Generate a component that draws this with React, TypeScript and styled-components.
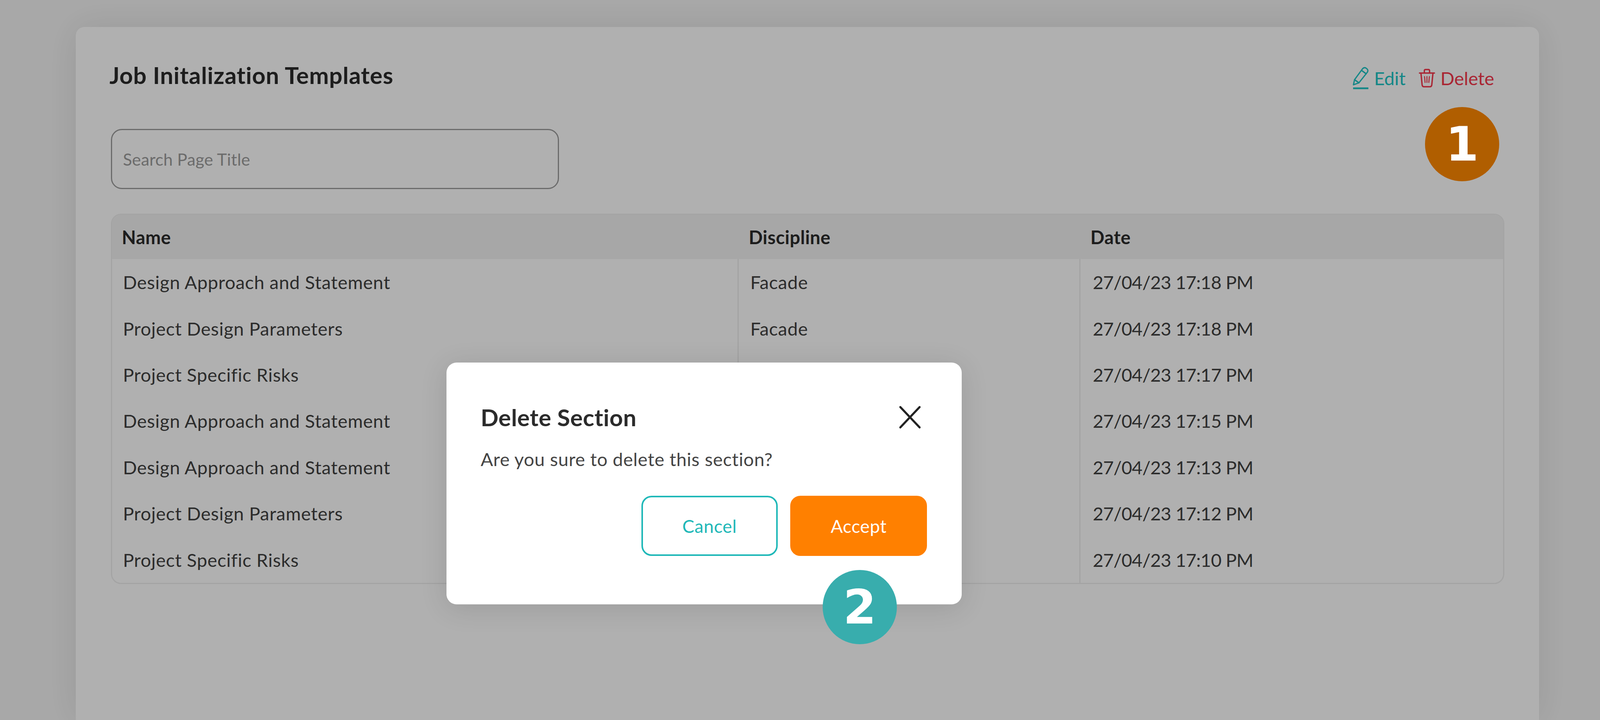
import React from "react";
import styled, { createGlobalStyle } from "styled-components";

/* Horizontal measures follow the frame width, so the layout fills whatever window it is opened in. */
const vx = (n: number) => `${(n / 43.24).toFixed(4)}vw`;

const Global = createGlobalStyle`
  html, body { margin: 0; padding: 0; height: 100%; overflow: hidden; background: #f4f4f4; }
  * { box-sizing: border-box; }
  #root { font-family: Lato, "Noto Sans", sans-serif; }
`;

const Page = styled.div`
  position: relative;
  width: 100vw;
  height: 100vh;
  padding: 69px ${vx(165)} 0 ${vx(205)};
  overflow: hidden;
`;

const Card = styled.main`
  height: 100%;
  background: #ffffff;
  border-radius: 22px 22px 0 0;
  box-shadow: 0 0 90px rgba(0, 0, 0, 0.09);
  padding: 84px ${vx(94)} 0 ${vx(95)};
`;

const TopBar = styled.header`
  display: flex;
  justify-content: space-between;
  align-items: flex-start;
  height: 177px;
`;

const Title = styled.h1`
  margin: 0 0 0 -4px;
  font-size: 60px;
  line-height: 78px;
  font-weight: 700;
  color: #2a2a2a;
  letter-spacing: 0.85px;
`;

const Actions = styled.div`
  display: flex;
  align-items: center;
  gap: ${vx(36)};
  margin: 18px ${vx(27)} 0 0;
`;

const Action = styled.button<{ $color: string }>`
  display: flex;
  align-items: center;
  gap: ${vx(14)};
  padding: 0;
  border: 0;
  background: none;
  font-family: inherit;
  font-size: 47px;
  line-height: 57px;
  color: ${(p) => p.$color};
  svg { flex: none; display: block; }
`;

const SearchBox = styled.div`
  display: flex;
  align-items: center;
  width: ${vx(1211)};
  height: 154px;
  padding-left: ${vx(29)};
  border: 3px solid #9c9c9c;
  border-radius: 28px;
  font-size: 43px;
  color: #9c9c9c;
  letter-spacing: 0.2px;
`;

const Table = styled.section`
  margin-top: 63px;
  border: 3px solid #eeeeee;
  border-radius: 26px;
  overflow: hidden;
`;

const columns = "44.97% 24.57% 1fr";

const HeaderRow = styled.div`
  display: grid;
  grid-template-columns: ${columns};
  align-items: center;
  height: 113px;
  background: #f2f2f2;
`;

const HeaderCell = styled.div`
  padding-left: ${vx(26)};
  font-size: 47px;
  font-weight: 700;
  color: #2a2a2a;
  letter-spacing: 0.5px;
  & + & { padding-left: ${vx(30)}; }
`;

const Row = styled.div`
  display: grid;
  grid-template-columns: ${columns};
  height: 118.4px;
`;

const Cell = styled.div`
  display: flex;
  align-items: center;
  padding-left: ${vx(29)};
  font-size: 47px;
  color: #404040;
  letter-spacing: 0.7px;
  & + & { border-left: 3px solid #ececec; padding-left: ${vx(31)}; }
  &:nth-child(3) { letter-spacing: -0.7px; padding-left: ${vx(33)}; }
`;

const Scrim = styled.div`
  position: absolute;
  inset: 0;
  background: rgba(0, 0, 0, 0.31);
`;

const Modal = styled.div`
  position: absolute;
  left: ${vx(1207)};
  top: 928px;
  width: ${vx(1392)};
  height: 619px;
  padding: 78px ${vx(94)} 0;
  background: #ffffff;
  border-radius: 26px;
  box-shadow: 0 10px 70px rgba(0, 0, 0, 0.12);
`;

const ModalHead = styled.div`
  display: flex;
  justify-content: space-between;
  align-items: center;
  height: 124px;
`;

const ModalTitle = styled.h2`
  margin: 0 0 0 -2px;
  font-size: 60px;
  font-weight: 700;
  color: #2b2b2b;
  letter-spacing: 0.5px;
`;

const Close = styled.button`
  padding: 0;
  margin-right: ${vx(17)};
  border: 0;
  background: none;
  svg { display: block; }
`;

const ModalText = styled.p`
  margin: 13px 0 0 -2px;
  font-size: 47px;
  line-height: 64px;
  color: #444444;
  letter-spacing: 0.7px;
`;

const ModalButtons = styled.div`
  display: flex;
  justify-content: flex-end;
  gap: ${vx(34)};
  margin-top: 62px;
`;

const Btn = styled.button<{ $primary?: boolean }>`
  width: ${vx(369)};
  height: 154px;
  border-radius: 26px;
  border: 4px solid ${(p) => (p.$primary ? "#ff8000" : "#1fb8b8")};
  background: ${(p) => (p.$primary ? "#ff8000" : "#ffffff")};
  color: ${(p) => (p.$primary ? "#ffffff" : "#1fb8b8")};
  font-family: inherit;
  font-size: 46px;
  letter-spacing: 0.6px;
`;

const Badge = styled.div<{ $x: number; $y: number; $bg: string }>`
  position: absolute;
  left: calc(${(p) => vx(p.$x)} - 95px);
  top: ${(p) => p.$y - 95}px;
  width: 190px;
  height: 190px;
  border-radius: 50%;
  display: flex;
  align-items: center;
  justify-content: center;
  background: ${(p) => p.$bg};
  color: #ffffff;
  font-family: "DejaVu Sans", sans-serif;
  font-weight: 700;
  font-size: 122px;
  line-height: 1;
`;

/* The discipline of rows 3 to 7 lies behind the dialog, so it is not shown. */
const rows = [
  ["Design Approach and Statement", "Facade", "27/04/23 17:18 PM"],
  ["Project Design Parameters", "Facade", "27/04/23 17:18 PM"],
  ["Project Specific Risks", "", "27/04/23 17:17 PM"],
  ["Design Approach and Statement", "", "27/04/23 17:15 PM"],
  ["Design Approach and Statement", "", "27/04/23 17:13 PM"],
  ["Project Design Parameters", "", "27/04/23 17:12 PM"],
  ["Project Specific Risks", "", "27/04/23 17:10 PM"],
];

const PencilIcon = () => (
  <svg width="41" height="58" viewBox="0 0 44 58" fill="none" stroke="currentColor" strokeWidth="3.4" strokeLinejoin="round" strokeLinecap="round" preserveAspectRatio="none">
    <path d="M2 46 L5 33 L27 5 Q31 1 36 3 L40 6 Q43 10 40 14 L17 41 Z" />
    <path d="M24 9 L37 18" />
    <path d="M5 33 L17 41" />
    <path d="M1 55 H43" strokeWidth="4.5" strokeLinecap="butt" />
  </svg>
);

const TrashIcon = () => (
  <svg width="42" height="48" viewBox="0 0 44 48" fill="none" stroke="currentColor" strokeWidth="3.6" strokeLinejoin="round" strokeLinecap="round" preserveAspectRatio="none">
    <path d="M2 11 H42" />
    <path d="M15 10 V5 Q15 2 18 2 H26 Q29 2 29 5 V10" />
    <path d="M6 12 L9 41 Q9.500 46 14 46 H30 Q34.500 46 35 41 L38 12" />
    <path d="M15.500 20 L17 35" strokeWidth="2.6" />
    <path d="M22 20 V35" strokeWidth="2.6" />
    <path d="M28.500 20 L27 35" strokeWidth="2.6" />
  </svg>
);

const CloseIcon = () => (
  <svg width="55" height="58" viewBox="0 0 58 58" fill="none" stroke="#222222" strokeWidth="5.4" strokeLinecap="round" preserveAspectRatio="none">
    <path d="M3 3 L55 55 M55 3 L3 55" />
  </svg>
);

export default function App() {
  return (
    <>
      <Global />
      <Page>
        <Card>
          <TopBar>
            <Title>Job Initalization Templates</Title>
            <Actions>
              <Action $color="#1dc4c4"><PencilIcon />Edit</Action>
              <Action $color="#f5364a"><TrashIcon />Delete</Action>
            </Actions>
          </TopBar>
          <SearchBox>Search Page Title</SearchBox>
          <Table>
            <HeaderRow>
              <HeaderCell>Name</HeaderCell>
              <HeaderCell>Discipline</HeaderCell>
              <HeaderCell>Date</HeaderCell>
            </HeaderRow>
            {rows.map((r, i) => (
              <Row key={i}>
                {r.map((c, j) => (
                  <Cell key={j}>{c}</Cell>
                ))}
              </Row>
            ))}
          </Table>
        </Card>
        <Scrim />
        <Modal>
          <ModalHead>
            <ModalTitle>Delete Section</ModalTitle>
            <Close><CloseIcon /></Close>
          </ModalHead>
          <ModalText>Are you sure to delete this section?</ModalText>
          <ModalButtons>
            <Btn>Cancel</Btn>
            <Btn $primary>Accept</Btn>
          </ModalButtons>
        </Modal>
        <Badge $x={3951.5} $y={368.5} $bg="#b05e00">1</Badge>
        <Badge $x={2323.5} $y={1554} $bg="#38adad">2</Badge>
      </Page>
    </>
  );
}
